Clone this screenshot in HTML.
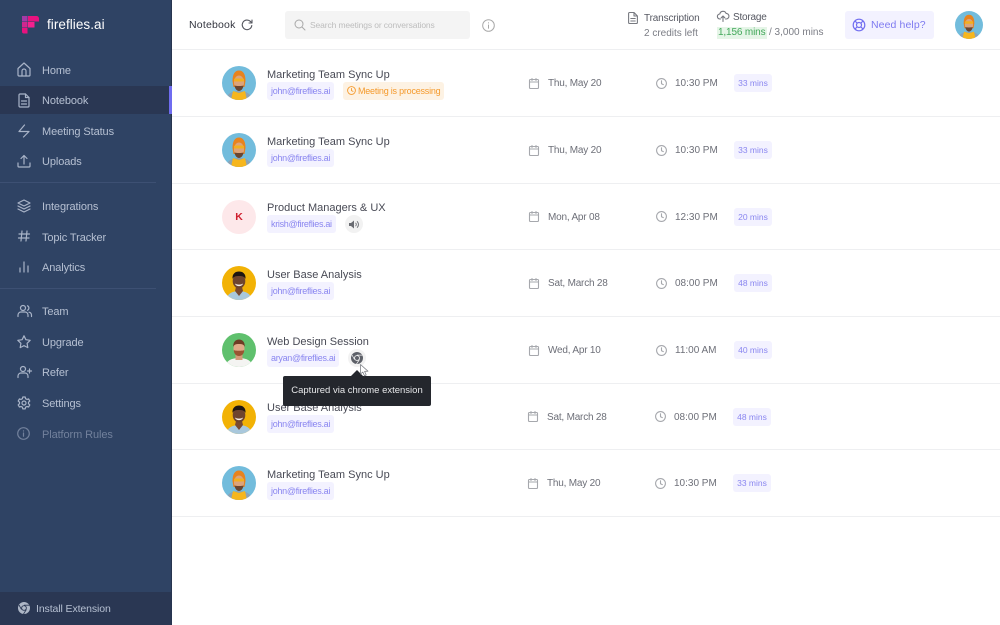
<!DOCTYPE html>
<html lang="en">
<head>
<meta charset="utf-8">
<title>Fireflies Notebook</title>
<style>
*{box-sizing:border-box;margin:0;padding:0}
html,body{width:1000px;height:625px;overflow:hidden;background:#fff}
body{position:relative;font-family:"Liberation Sans",sans-serif;color:#4a4c57}
.a{position:absolute;white-space:nowrap}
svg{position:absolute;overflow:visible}
#side{position:absolute;left:0;top:0;width:172px;height:625px;background:#2f4364;border-right:1px solid #27344f}
.nav{position:absolute;left:42px;margin-top:1px;font-size:11px;letter-spacing:-.1px;color:#b6c0d2;line-height:14px;white-space:nowrap}
.ic{fill:none;stroke:#a9b4c8;stroke-width:1.2;stroke-linecap:round;stroke-linejoin:round}
.sep{position:absolute;left:0;width:156px;height:1px;background:#3d5073}
.div{position:absolute;left:172px;width:828px;height:1px;background:#eeeff1}
.title{position:absolute;left:267px;margin-top:1px;font-size:11px;letter-spacing:0;color:#484a55;line-height:14px;white-space:nowrap}
.mail{position:absolute;left:267px;height:18px;line-height:18px;background:#f3f2ff;color:#8a86f0;font-size:9px;padding:0 4px;border-radius:3px;white-space:nowrap;letter-spacing:-.3px}
.date,.time{position:absolute;margin-top:1px;font-size:10px;line-height:14px;color:#6d6f78;white-space:nowrap}
.date{left:548px;letter-spacing:-.2px}.time{left:675px}
.dur{position:absolute;left:734px;width:38px;height:18px;line-height:18px;background:#f3f2ff;color:#8a86f0;font-size:8.5px;text-align:center;border-radius:3px;white-space:nowrap}
.g{fill:none;stroke:#a6a8ad;stroke-width:1.1;stroke-linecap:round;stroke-linejoin:round}
</style>
</head>
<body>
<svg width="0" height="0" style="position:absolute">
<defs>
<clipPath id="c"><circle cx="17" cy="17" r="17"/></clipPath>
<symbol id="john" viewBox="0 0 34 34"><g clip-path="url(#c)"><rect width="34" height="34" fill="#72bcdc"/><path d="M4 34c1-6 5-9 13-9s12 3 13 9z" fill="#8da3b5"/><path d="M9 34l2-9 6 2 6-2 2 9z" fill="#f6b61d"/><path d="M10.500 15c0-7 2.500-10.500 6.500-10.500s6.500 3.500 6.500 10.500l-1 6h-11z" fill="#e8831e"/><ellipse cx="17" cy="16.500" rx="5" ry="7" fill="#dca47c"/><rect x="12" y="12.500" width="10" height="3" rx="1" fill="#f2b01e"/><path d="M12.500 19.500c2 .7 7 .7 9 0-.5 3.500-2.500 5.500-4.500 5.500s-4-2-4.500-5.500z" fill="#6b4630"/></g></symbol>
<symbol id="black" viewBox="0 0 34 34"><g clip-path="url(#c)"><rect width="34" height="34" fill="#f2b205"/><path d="M4 34c1-6 6-9 13-9s12 3 13 9z" fill="#a9c8dc"/><path d="M13 25l4 5 4-5-1-4h-6z" fill="#7a4a30"/><ellipse cx="17" cy="15" rx="6.300" ry="7.500" fill="#6f452e"/><path d="M10.500 13c-.5-5.500 3-7.500 6.500-7.500s7 2 6.500 7.500c-1-2.500-3-3-6.500-3s-5.500.5-6.500 3z" fill="#1e1612"/><path d="M13 17.500c2 1.500 6 1.500 8 0-.7 3.500-7.300 3.500-8 0z" fill="#f4f0ea"/></g></symbol>
<symbol id="aryan" viewBox="0 0 34 34"><g clip-path="url(#c)"><rect width="34" height="34" fill="#5fc06d"/><path d="M3 34c1-6 6-9 14-9s13 3 14 9z" fill="#f4f4f2"/><rect x="13.500" y="20" width="7" height="7" fill="#d49a79"/><ellipse cx="17" cy="15.500" rx="5.500" ry="7" fill="#e0aa88"/><path d="M11.300 14c-.5-5 2.500-7.500 5.700-7.500s6.200 2.500 5.700 7.500c-.7-2.500-2.500-3-5.700-3s-5 .5-5.700 3z" fill="#6d3d24"/><path d="M11.800 17c1 1 9.400 1 10.400 0 0 4-2.500 6-5.200 6s-5.200-2-5.200-6z" fill="#9a5532"/></g></symbol>
</defs>
</svg>

<div id="side">
  <svg style="left:22px;top:16px" width="17" height="18" viewBox="0 0 17 18"><rect width="5.500" height="5.500" fill="#a33aa6"/><rect y="6" width="5.500" height="5.500" fill="#d0268f"/><path d="M0 12h5.500v5.500H2a2 2 0 0 1-2-2z" fill="#e8127f"/><path d="M6 0h8.500a2.500 2.500 0 0 1 2.500 2.500V5.500H6z" fill="#e8127f"/><path d="M6 6h6.500v5.500H6z" fill="#f5208f"/></svg>
  <div class="a" style="left:47px;top:16px;font-size:13.500px;line-height:18px;color:#fff;letter-spacing:.05px">fireflies.ai</div>

  <div style="position:absolute;left:0;top:86px;width:171px;height:28px;background:#2a3753"></div>
  <div style="position:absolute;left:169px;top:86px;width:3px;height:28px;background:#6f6cf0"></div>

  <svg class="ic" style="left:17px;top:62px" width="14" height="15" viewBox="0 0 14 15"><path d="M1 6.500L7 1l6 5.500V13a1 1 0 0 1-1 1H2a1 1 0 0 1-1-1z"/><path d="M5 14V9a2 2 0 0 1 4 0v5"/></svg>
  <div class="nav" style="top:63px">Home</div>
  <svg class="ic" style="left:18px;top:93px" width="12" height="15" viewBox="0 0 12 15"><path d="M1 2a1 1 0 0 1 1-1h5.500L11 4.500V13a1 1 0 0 1-1 1H2a1 1 0 0 1-1-1z"/><path d="M7.500 1v3.500H11M3.500 8h5M3.500 11h5"/></svg>
  <div class="nav" style="top:93px">Notebook</div>
  <svg class="ic" style="left:17px;top:124px" width="14" height="14" viewBox="0 0 14 14"><path d="M7.500 1L2 7.500h10L6.500 13"/></svg>
  <div class="nav" style="top:124px">Meeting Status</div>
  <svg class="ic" style="left:17px;top:154px" width="14" height="14" viewBox="0 0 14 14"><path d="M1 9v3a1 1 0 0 0 1 1h10a1 1 0 0 0 1-1V9M7 10V1.500M4 4.500l3-3 3 3"/></svg>
  <div class="nav" style="top:154px">Uploads</div>
  <div class="sep" style="top:182px"></div>

  <svg class="ic" style="left:17px;top:199px" width="14" height="14" viewBox="0 0 14 14"><path d="M7 1L1 4l6 3 6-3zM1 7l6 3 6-3M1 10l6 3 6-3"/></svg>
  <div class="nav" style="top:199px">Integrations</div>
  <svg class="ic" style="left:18px;top:230px" width="12" height="12" viewBox="0 0 12 12"><path d="M4 1L3 11M9 1L8 11M1 4h10.500M.5 8H11"/></svg>
  <div class="nav" style="top:230px">Topic Tracker</div>
  <svg class="ic" style="left:19px;top:261px" width="10" height="12" viewBox="0 0 10 12"><path d="M1 7v4M5 1v10M9 5v6"/></svg>
  <div class="nav" style="top:260px">Analytics</div>
  <div class="sep" style="top:288px"></div>

  <svg class="ic" style="left:17px;top:305px" width="15" height="12" viewBox="0 0 15 12"><circle cx="6" cy="3" r="2.500"/><path d="M1 11.500V10a3 3 0 0 1 3-3h4a3 3 0 0 1 3 3v1.500M10.500.8a2.500 2.500 0 0 1 0 4.500M12 7.200A3 3 0 0 1 14.500 10v1.500"/></svg>
  <div class="nav" style="top:304px">Team</div>
  <svg class="ic" style="left:17px;top:335px" width="14" height="13" viewBox="0 0 14 13"><path d="M7 .8l1.900 3.900 4.300.6-3.100 3 .7 4.300L7 10.600l-3.800 2 .7-4.300-3.100-3 4.300-.6z"/></svg>
  <div class="nav" style="top:335px">Upgrade</div>
  <svg class="ic" style="left:17px;top:366px" width="15" height="12" viewBox="0 0 15 12"><circle cx="6" cy="3" r="2.500"/><path d="M1 11.500V10a3 3 0 0 1 3-3h4a3 3 0 0 1 3 3v1.500M12.500 3v4M10.500 5h4"/></svg>
  <div class="nav" style="top:365px">Refer</div>
  <svg class="ic" style="left:17px;top:396px" width="14" height="14" viewBox="0 0 14 14"><circle cx="7" cy="7" r="2"/><path d="M5.800 1h2.400l.4 1.700 1.300.7 1.700-.5 1.200 2.100-1.300 1.200v1.500l1.300 1.200-1.200 2.100-1.700-.5-1.300.7-.4 1.700H5.800l-.4-1.700-1.300-.7-1.700.5-1.200-2.100 1.300-1.200V6.200L1.200 5l1.200-2.100 1.700.5 1.300-.7z"/></svg>
  <div class="nav" style="top:396px">Settings</div>
  <svg class="ic" style="left:17px;top:427px;stroke:#72819c" width="13" height="13" viewBox="0 0 13 13"><circle cx="6.500" cy="6.500" r="5.800"/><path d="M6.500 6v3.200M6.500 3.800v.2"/></svg>
  <div class="nav" style="top:427px;color:#72819c">Platform Rules</div>

  <div style="position:absolute;left:0;top:592px;width:171px;height:33px;background:#2a3753"></div>
  <svg style="left:18px;top:602px" width="12" height="12" viewBox="0 0 12 12"><circle cx="6" cy="6" r="6" fill="#aeb7c7"/><circle cx="6" cy="6" r="2.800" fill="#2a3753"/><circle cx="6" cy="6" r="1.900" fill="#aeb7c7"/><path d="M6 3.200h5.500M3.500 7.500L1 3M8.400 7.500L5.500 12" stroke="#2a3753" stroke-width=".8" fill="none"/></svg>
  <div class="nav" style="left:36px;top:601px;font-size:10.500px">Install Extension</div>
</div>

<div class="a" style="left:189px;top:18px;font-size:10.500px;line-height:14px;color:#33353f;letter-spacing:.2px">Notebook</div>
<svg style="left:241px;top:19px" width="12" height="12" viewBox="0 0 12 12" fill="none" stroke="#55575f" stroke-width="1.100" stroke-linecap="round" stroke-linejoin="round"><path d="M10.800 6.500A4.800 4.800 0 1 1 9.300 2.300L11 4M11 1v3H8"/></svg>
<div style="position:absolute;left:285px;top:11px;width:185px;height:28px;background:#f4f4f4;border-radius:3px"></div>
<svg style="left:294px;top:19px" width="12" height="12" viewBox="0 0 12 12" fill="none" stroke="#a8a8a8" stroke-width="1"><circle cx="5" cy="5" r="4"/><path d="M8 8l3 3" stroke-linecap="round"/></svg>
<div class="a" style="left:310px;top:19px;font-size:8.500px;line-height:12px;color:#bdbdbd;letter-spacing:-.12px">Search meetings or conversations</div>
<svg style="left:482px;top:19px" width="13" height="13" viewBox="0 0 13 13" fill="none" stroke="#a8a8a8" stroke-width="1"><circle cx="6.500" cy="6.500" r="5.800"/><path d="M6.500 6v3.200M6.500 3.700v.3" stroke-linecap="round"/></svg>

<svg class="g" style="left:628px;top:12px;stroke:#777980" width="10" height="12" viewBox="0 0 10 12"><path d="M.6 1.500a1 1 0 0 1 1-1H6L9.400 4v6.500a1 1 0 0 1-1 1H1.600a1 1 0 0 1-1-1zM6 .5V4h3.400M2.800 6.500h4.400M2.800 9h4.400"/></svg>
<div class="a" style="left:644px;top:12px;font-size:10px;line-height:14px;color:#565862;letter-spacing:-.15px">Transcription</div>
<div class="a" style="left:644px;top:27px;font-size:10px;line-height:14px;color:#7b7d85">2 credits left</div>
<svg class="g" style="left:717px;top:11px;stroke:#777980" width="12" height="11" viewBox="0 0 12 11"><path d="M3.500 8H3A2.500 2.500 0 0 1 2.800 3a3.300 3.300 0 0 1 6.300-.6A2.800 2.800 0 0 1 9.200 8H8.500M6 10.500V5M4.200 6.800L6 5l1.800 1.800"/></svg>
<div class="a" style="left:733px;top:11px;font-size:10px;line-height:14px;color:#565862;letter-spacing:-.2px">Storage</div>
<div class="a" style="left:717px;top:27px;width:50px;height:12px;line-height:12px;padding:0 1px;background:#e5f5e7;color:#42a85a;font-size:10px;letter-spacing:-.15px">1,156 mins</div>
<div class="a" style="left:769px;top:26px;font-size:10px;line-height:14px;color:#7b7d85">/ 3,000 mins</div>

<div style="position:absolute;left:845px;top:11px;width:89px;height:28px;background:#f3f2ff;border-radius:3px"></div>
<svg style="left:852px;top:18px" width="14" height="14" viewBox="0 0 14 14" fill="none" stroke="#716ef0" stroke-width="1.200"><circle cx="7" cy="7" r="5.800"/><circle cx="7" cy="7" r="2.500"/><path d="M3 3l2.200 2.200M11 3L8.800 5.200M3 11l2.200-2.200M11 11L8.800 8.800"/></svg>
<div class="a" style="left:871px;top:18px;font-size:10.500px;line-height:14px;color:#7e7bf0;letter-spacing:.1px">Need help?</div>
<svg style="left:955px;top:11px" width="28" height="28"><use href="#john" width="28" height="28"/></svg>

<div class="div" style="top:49px"></div>
<div class="div" style="top:116px"></div>
<div class="div" style="top:183px"></div>
<div class="div" style="top:249px"></div>
<div class="div" style="top:316px"></div>
<div class="div" style="top:383px"></div>
<div class="div" style="top:449px"></div>
<div class="div" style="top:516px"></div>

<!-- Row 1 -->
<svg style="left:222px;top:66px" width="34" height="34"><use href="#john" width="34" height="34"/></svg>
<div class="title" style="top:67px">Marketing Team Sync Up</div>
<div class="mail" style="top:82px">john@fireflies.ai</div>
<div class="a" style="left:343px;top:82px;width:101px;height:18px;background:#fdf2e3;border-radius:3px"></div>
<svg style="left:347px;top:86px" width="9" height="9" viewBox="0 0 9 9" fill="none" stroke="#f59a2c" stroke-width=".9" stroke-linecap="round"><circle cx="4.500" cy="4.500" r="3.900"/><path d="M4.500 2.400v2.200l1.500.8"/></svg>
<div class="a" style="left:358px;top:85px;font-size:9px;line-height:12px;color:#f59a2c;letter-spacing:-.22px">Meeting is processing</div>
<svg class="g" style="left:529px;top:78px" width="10" height="11" viewBox="0 0 10 11"><rect x=".5" y="1.500" width="9" height="9" rx="1"/><path d="M.5 4h9M3 .5v2M7 .5v2"/></svg>
<div class="date" style="top:76px">Thu, May 20</div>
<svg class="g" style="left:656px;top:78px" width="11" height="11" viewBox="0 0 11 11"><circle cx="5.500" cy="5.500" r="4.900"/><path d="M5.500 2.800v2.900l1.800.9"/></svg>
<div class="time" style="top:76px">10:30 PM</div>
<div class="dur" style="top:74px">33 mins</div>

<!-- Row 2 -->
<svg style="left:222px;top:133px" width="34" height="34"><use href="#john" width="34" height="34"/></svg>
<div class="title" style="top:134px">Marketing Team Sync Up</div>
<div class="mail" style="top:149px">john@fireflies.ai</div>
<svg class="g" style="left:529px;top:145px" width="10" height="11" viewBox="0 0 10 11"><rect x=".5" y="1.500" width="9" height="9" rx="1"/><path d="M.5 4h9M3 .5v2M7 .5v2"/></svg>
<div class="date" style="top:143px">Thu, May 20</div>
<svg class="g" style="left:656px;top:145px" width="11" height="11" viewBox="0 0 11 11"><circle cx="5.500" cy="5.500" r="4.900"/><path d="M5.500 2.800v2.900l1.800.9"/></svg>
<div class="time" style="top:143px">10:30 PM</div>
<div class="dur" style="top:141px">33 mins</div>

<!-- Row 3 -->
<div class="a" style="left:222px;top:200px;width:34px;height:34px;border-radius:50%;background:#fde8ea;color:#cf1f2e;font-weight:bold;font-size:10.500px;line-height:34px;text-align:center">K</div>
<div class="title" style="top:200px">Product Managers &amp; UX</div>
<div class="mail" style="top:215px">krish@fireflies.ai</div>
<div class="a" style="left:345px;top:215px;width:18px;height:18px;border-radius:50%;background:#f2f2f2"></div>
<svg style="left:349px;top:220px" width="11" height="9" viewBox="0 0 11 9"><path d="M0 3h2l3-2.500v8L2 6H0z" fill="#6a6c72"/><path d="M6.500 2.800a2.200 2.200 0 0 1 0 3.400M8 1.300a4.300 4.300 0 0 1 0 6.400" fill="none" stroke="#6a6c72" stroke-width=".9"/></svg>
<svg class="g" style="left:529px;top:211px" width="10" height="11" viewBox="0 0 10 11"><rect x=".5" y="1.500" width="9" height="9" rx="1"/><path d="M.5 4h9M3 .5v2M7 .5v2"/></svg>
<div class="date" style="top:210px">Mon, Apr 08</div>
<svg class="g" style="left:656px;top:211px" width="11" height="11" viewBox="0 0 11 11"><circle cx="5.500" cy="5.500" r="4.900"/><path d="M5.500 2.800v2.900l1.800.9"/></svg>
<div class="time" style="top:210px">12:30 PM</div>
<div class="dur" style="top:208px">20 mins</div>

<!-- Row 4 -->
<svg style="left:222px;top:266px" width="34" height="34"><use href="#black" width="34" height="34"/></svg>
<div class="title" style="top:267px">User Base Analysis</div>
<div class="mail" style="top:282px">john@fireflies.ai</div>
<svg class="g" style="left:529px;top:278px" width="10" height="11" viewBox="0 0 10 11"><rect x=".5" y="1.500" width="9" height="9" rx="1"/><path d="M.5 4h9M3 .5v2M7 .5v2"/></svg>
<div class="date" style="top:276px">Sat, March 28</div>
<svg class="g" style="left:656px;top:278px" width="11" height="11" viewBox="0 0 11 11"><circle cx="5.500" cy="5.500" r="4.900"/><path d="M5.500 2.800v2.900l1.800.9"/></svg>
<div class="time" style="top:276px">08:00 PM</div>
<div class="dur" style="top:274px">48 mins</div>

<!-- Row 5 -->
<svg style="left:222px;top:333px" width="34" height="34"><use href="#aryan" width="34" height="34"/></svg>
<div class="title" style="top:334px">Web Design Session</div>
<div class="mail" style="top:349px">aryan@fireflies.ai</div>
<div class="a" style="left:348px;top:349px;width:18px;height:18px;border-radius:50%;background:#f2f2f2"></div>
<svg style="left:351px;top:352px" width="12" height="12" viewBox="0 0 12 12"><circle cx="6" cy="6" r="6" fill="#5d6068"/><circle cx="6" cy="6" r="2.900" fill="#f2f2f2"/><circle cx="6" cy="6" r="2" fill="#5d6068"/><path d="M6 3.100h5.600M3.500 7.500L1 3M8.500 7.500L5.500 12" stroke="#f2f2f2" stroke-width=".7" fill="none"/></svg>
<svg class="g" style="left:529px;top:345px" width="10" height="11" viewBox="0 0 10 11"><rect x=".5" y="1.500" width="9" height="9" rx="1"/><path d="M.5 4h9M3 .5v2M7 .5v2"/></svg>
<div class="date" style="top:343px">Wed, Apr 10</div>
<svg class="g" style="left:656px;top:345px" width="11" height="11" viewBox="0 0 11 11"><circle cx="5.500" cy="5.500" r="4.900"/><path d="M5.500 2.800v2.900l1.800.9"/></svg>
<div class="time" style="top:343px">11:00 AM</div>
<div class="dur" style="top:341px">40 mins</div>

<!-- Row 6 -->
<svg style="left:222px;top:400px" width="34" height="34"><use href="#black" width="34" height="34"/></svg>
<div class="title" style="top:400px">User Base Analysis</div>
<div class="mail" style="top:415px">john@fireflies.ai</div>
<svg class="g" style="left:528px;top:411px" width="10" height="11" viewBox="0 0 10 11"><rect x=".5" y="1.500" width="9" height="9" rx="1"/><path d="M.5 4h9M3 .5v2M7 .5v2"/></svg>
<div class="date" style="left:547px;top:410px">Sat, March 28</div>
<svg class="g" style="left:655px;top:411px" width="11" height="11" viewBox="0 0 11 11"><circle cx="5.500" cy="5.500" r="4.900"/><path d="M5.500 2.800v2.900l1.800.9"/></svg>
<div class="time" style="left:674px;top:410px">08:00 PM</div>
<div class="dur" style="left:733px;top:408px">48 mins</div>

<!-- Row 7 -->
<svg style="left:222px;top:466px" width="34" height="34"><use href="#john" width="34" height="34"/></svg>
<div class="title" style="top:467px">Marketing Team Sync Up</div>
<div class="mail" style="top:482px">john@fireflies.ai</div>
<svg class="g" style="left:528px;top:478px" width="10" height="11" viewBox="0 0 10 11"><rect x=".5" y="1.500" width="9" height="9" rx="1"/><path d="M.5 4h9M3 .5v2M7 .5v2"/></svg>
<div class="date" style="left:547px;top:476px">Thu, May 20</div>
<svg class="g" style="left:655px;top:478px" width="11" height="11" viewBox="0 0 11 11"><circle cx="5.500" cy="5.500" r="4.900"/><path d="M5.500 2.800v2.900l1.800.9"/></svg>
<div class="time" style="left:674px;top:476px">10:30 PM</div>
<div class="dur" style="left:733px;top:474px">33 mins</div>

<!-- Tooltip -->
<svg style="left:350px;top:370px" width="14" height="7" viewBox="0 0 14 7"><path d="M0 7L7 0l7 7z" fill="#24272d"/></svg>
<div class="a" style="left:283px;top:376px;width:148px;height:30px;background:#24272d;border-radius:2px;color:#e6e7e9;font-size:9.500px;line-height:30px;text-align:center">Captured via chrome extension</div>
<svg style="left:360px;top:364px" width="10" height="13" viewBox="0 0 10 13"><path d="M.5.500v9.500l2.300-2 1.700 3.800 1.700-.8L4.600 7.400l3.400-.2z" fill="#fff" stroke="#7f8288" stroke-width=".8" stroke-linejoin="round"/></svg>
</body>
</html>
